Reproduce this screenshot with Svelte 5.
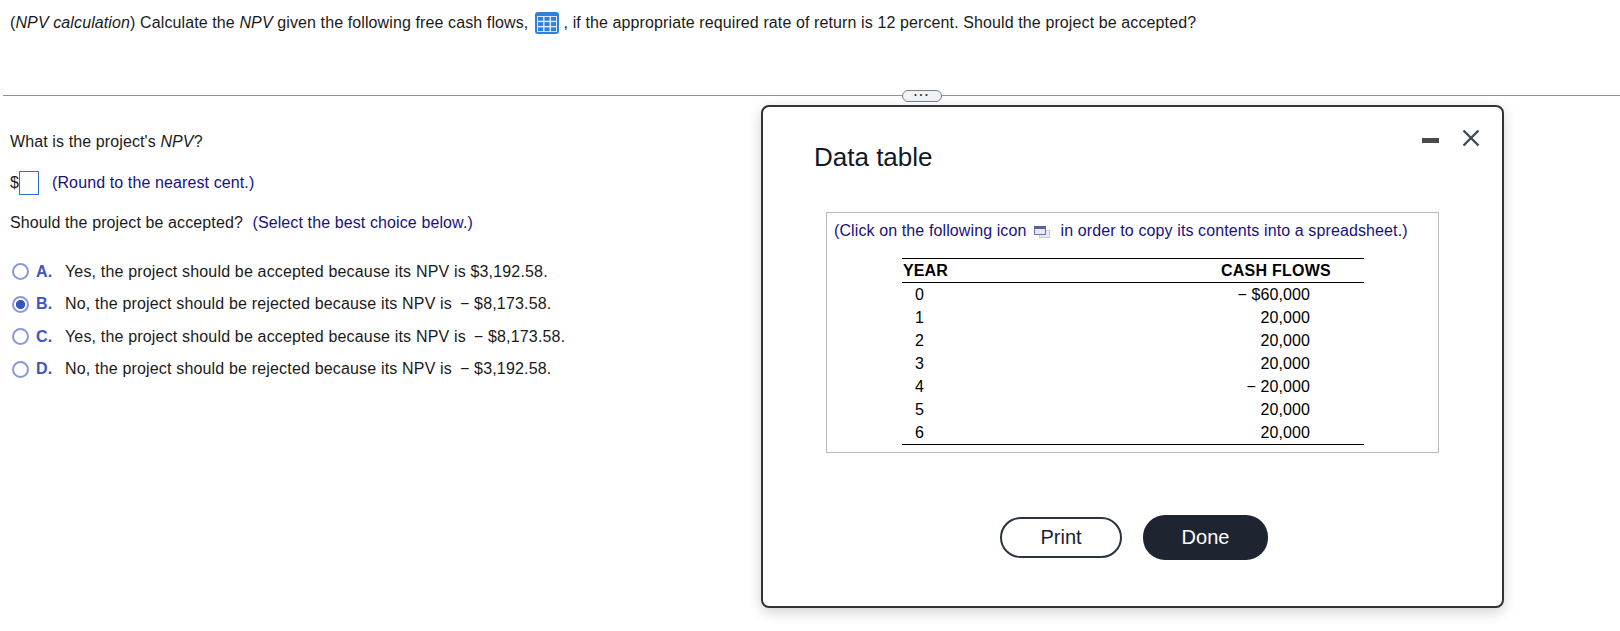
<script>
  const choices = [
    { k: 'A.', t: 'Yes, the project should be accepted because its NPV is $3,192.58.' },
    { k: 'B.', t: 'No, the project should be rejected because its NPV is \u2009− $8,173.58.', on: true },
    { k: 'C.', t: 'Yes, the project should be accepted because its NPV is \u2009− $8,173.58.' },
    { k: 'D.', t: 'No, the project should be rejected because its NPV is \u2009− $3,192.58.' }
  ];
  const rows = [
    ['0', '− $60,000'], ['1', '20,000'], ['2', '20,000'], ['3', '20,000'],
    ['4', '− 20,000'], ['5', '20,000'], ['6', '20,000']
  ];
</script>

<div class="page">
  <p class="question">(<i>NPV calculation</i>) Calculate the <i>NPV</i> given the following free cash flows,
    <svg class="grid-icon" width="24" height="22" viewBox="0 0 24 22">
      <rect width="24" height="22" rx="3" fill="#2f7fdc" />
      <rect x="2" y="4" width="20" height="16" fill="#d8e8fa" />
      <g fill="#2f7fdc">
        <rect x="3" y="5" width="5" height="3.7" /><rect x="9.5" y="5" width="5" height="3.7" /><rect x="16" y="5" width="5" height="3.7" />
        <rect x="3" y="10.2" width="5" height="3.7" /><rect x="9.5" y="10.2" width="5" height="3.7" /><rect x="16" y="10.2" width="5" height="3.7" />
        <rect x="3" y="15.4" width="5" height="3.7" /><rect x="9.5" y="15.4" width="5" height="3.7" /><rect x="16" y="15.4" width="5" height="3.7" />
      </g>
    </svg> , if the appropriate required rate of return is 12 percent. Should the project be accepted?</p>

  <div class="divider"><span class="more">···</span></div>

  <section class="answers">
    <p>What is the project's <i>NPV</i>?</p>
    <p class="money"><span>$</span><span class="input"></span><span class="hint">(Round to the nearest cent.)</span></p>
    <p>Should the project be accepted? <span class="hint second">(Select the best choice below.)</span></p>
    <ul>
      {#each choices as c}
        <li>
          <span class="radio" class:on={c.on}></span>
          <b>{c.k}</b>
          <span class="choice">{c.t}</span>
        </li>
      {/each}
    </ul>
  </section>

  <div class="modal">
    <div class="controls">
      <span class="min"></span>
      <svg width="18" height="18" viewBox="0 0 18 18"><path d="M1.5 1.5 16.5 16.5M16.5 1.5 1.5 16.5" stroke="#3f4a57" stroke-width="2.4" fill="none" /></svg>
    </div>
    <h2>Data table</h2>
    <div class="box">
      <p class="copy">(Click on the following icon
        <svg class="copy-icon" width="16" height="14" viewBox="0 0 16 14">
          <rect x="5.5" y="5.5" width="10" height="7" fill="#e9eaf5" stroke="#c5c8e2" />
          <rect x="0.5" y="1.5" width="11" height="8" fill="#e9eaf5" stroke="#6d73ad" />
          <rect x="0" y="1" width="12" height="3" fill="#5a60a3" />
        </svg>
        in order to copy its contents into a spreadsheet.)</p>
      <table>
        <thead><tr><th class="y">YEAR</th><th class="c">CASH FLOWS</th></tr></thead>
        <tbody>
          {#each rows as r}
            <tr><td class="yc">{r[0]}</td><td class="cc">{r[1]}</td></tr>
          {/each}
        </tbody>
      </table>
    </div>
    <div class="buttons">
      <button class="print">Print</button>
      <button class="done">Done</button>
    </div>
  </div>
</div>

<style>
  :global(body) { margin: 0; background: #fff; }
  .page {
    position: relative;
    height: 631px;
    overflow: hidden;
    font-family: "Liberation Sans", Arial, sans-serif;
    font-size: 16px;
    letter-spacing: 0.11px;
    color: #1a1a1a;
  }
  p { margin: 0; }
  .question {
    padding: 12px 0 0 10px;
    height: 34px;
    line-height: 21px;
    white-space: pre-wrap;
  }
  .grid-icon { vertical-align: -6px; margin: 0 0 0 2px; }
  .divider {
    margin: 49px 0 0 3px;
    height: 1px;
    background: #8a94a6;
    position: relative;
  }
  .more {
    position: absolute;
    left: 899px;
    top: -5px;
    width: 40px;
    height: 12px;
    box-sizing: border-box;
    border: 1px solid #76808f;
    border-radius: 6px;
    background: #f1f3f6;
    color: #333;
    font-size: 12px;
    font-weight: bold;
    letter-spacing: 1.5px;
    line-height: 9px;
    text-align: center;
  }
  .answers { padding: 36px 0 0 10px; }
  .answers p { line-height: 20px; }
  .money {
    display: flex;
    align-items: center;
    margin-top: 19px;
    height: 24px;
  }
  .input {
    width: 20px;
    height: 24px;
    box-sizing: border-box;
    border: 1px solid #2f6fd0;
    margin-right: 13px;
  }
  .hint { color: #17127e; }
  .second { margin-left: 5px; }
  .money + p { margin-top: 18px; }
  ul { list-style: none; margin: 22.5px 0 0 2px; padding: 0; }
  li {
    display: flex;
    align-items: center;
    height: 32.5px;
    white-space: pre;
  }
  .choice { letter-spacing: 0.17px; }
  .radio {
    width: 17px;
    height: 17px;
    box-sizing: border-box;
    border: 2px solid #8a9ad8;
    border-radius: 50%;
    margin-right: 7px;
    background: #fff;
  }
  .radio.on { background: radial-gradient(circle, #3555c8 0 4.2px, #fff 5px); }
  li b { width: 29px; color: #3d56c4; font-weight: bold; }
  .modal {
    position: absolute;
    left: 761px;
    top: 105px;
    width: 743px;
    height: 503px;
    box-sizing: border-box;
    border: 2px solid #333;
    border-radius: 8px;
    background: #fff;
    box-shadow: 0 4px 14px rgba(0, 0, 0, 0.18);
  }
  .controls {
    position: absolute;
    top: 22px;
    right: 22px;
    display: flex;
    align-items: center;
    gap: 23px;
  }
  .min { width: 17px; height: 5px; margin-top: 5px; background: #4a4a4a; }
  h2 {
    margin: 0;
    padding: 33px 0 0 51px;
    height: 34px;
    font-size: 26px;
    font-weight: normal;
    letter-spacing: 0;
    line-height: 34px;
    color: #101828;
  }
  .box {
    margin: 38px 0 0 63px;
    width: 613px;
    height: 241px;
    box-sizing: border-box;
    border: 1px solid #b9b9b9;
    padding: 0 0 0 7px;
  }
  .copy { color: #17127e; line-height: 20px; padding-top: 8px; white-space: nowrap; }
  .copy-icon { vertical-align: -3px; margin: 0 6px 0 3px; }
  table {
    margin: 17px 0 0 68px;
    width: 462px;
    border-collapse: collapse;
    color: #000;
  }
  thead tr { border-top: 1px solid #000; border-bottom: 1px solid #000; }
  th { height: 23px; padding: 0; font-size: 16px; font-weight: bold; }
  th.y { text-align: left; padding-left: 1px; width: 60px; }
  th.c { text-align: right; padding-right: 33px; letter-spacing: 0.25px; }
  td { height: 23px; padding: 0; line-height: 23px; }
  .yc { padding-left: 13px; }
  .cc { text-align: right; padding-right: 54px; }
  tbody tr:last-child { border-bottom: 1px solid #000; }
  .buttons {
    position: absolute;
    left: 237px;
    top: 408px;
    display: flex;
    align-items: center;
    gap: 21px;
  }
  button {
    font-family: inherit;
    font-size: 20px;
    border-radius: 22px;
    padding: 0;
  }
  .print {
    width: 122px;
    height: 41px;
    border: 2px solid #2b3240;
    background: #fff;
    color: #1c2230;
  }
  .done {
    width: 125px;
    height: 45px;
    border: none;
    background: #1e2430;
    color: #fff;
  }
</style>
